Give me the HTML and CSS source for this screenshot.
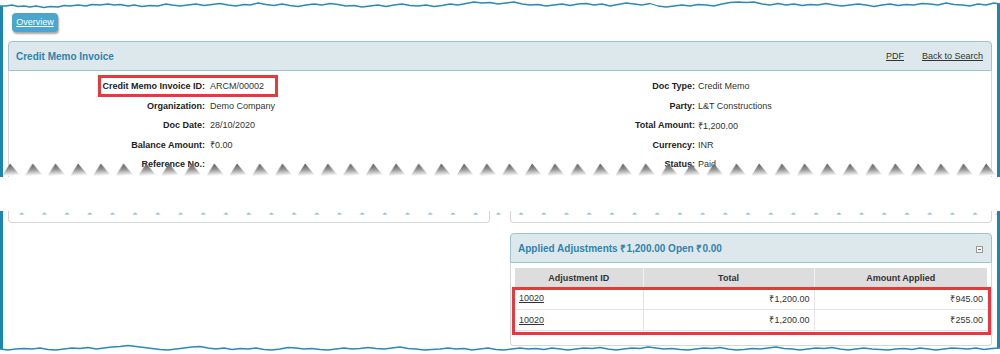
FILE: index.html
```html
<!DOCTYPE html>
<html>
<head>
<meta charset="utf-8">
<title>Credit Memo Invoice</title>
<link rel="stylesheet" href="styles.css">
</head>
<body>
<div class="sheet">
  <svg class="svg-defs" width="0" height="0" aria-hidden="true">
    <defs>
      <linearGradient id="shade" x1="0.25" y1="0" x2="0.35" y2="1">
        <stop offset="0" stop-color="#565656"/>
        <stop offset="0.5" stop-color="#979797"/>
        <stop offset="1" stop-color="#ffffff"/>
      </linearGradient>
      <filter id="soft" x="-5%" y="-20%" width="110%" height="140%">
        <feGaussianBlur stdDeviation="0.5"/>
      </filter>
      <pattern id="zig" width="22.7" height="15" patternUnits="userSpaceOnUse">
        <polygon points="-1,14 7,1.5 17.5,14" fill="url(#shade)"/>
      </pattern>
      <pattern id="dash" width="22.7" height="6" patternUnits="userSpaceOnUse">
        <polygon points="16,3.6 18.7,1.4 21.4,3.6" fill="#86b4c6"/>
      </pattern>
    </defs>
  </svg>

  <section class="piece piece-top">
    <a class="btn-overview" href="#">Overview</a>
    <div class="panel panel-main">
      <div class="panel-head">
        <h2 class="panel-title">Credit Memo Invoice</h2>
        <nav class="head-links"><a href="#">PDF</a><a href="#">Back to Search</a></nav>
      </div>
      <div class="panel-body fields">
        <div class="lbl">Credit Memo Invoice ID:</div><div class="val">ARCM/00002</div>
        <div class="lbl">Doc Type:</div><div class="val val-r">Credit Memo</div>
        <div class="lbl">Organization:</div><div class="val">Demo Company</div>
        <div class="lbl">Party:</div><div class="val val-r">L&amp;T Constructions</div>
        <div class="lbl">Doc Date:</div><div class="val">28/10/2020</div>
        <div class="lbl">Total Amount:</div><div class="val val-r">₹1,200.00</div>
        <div class="lbl">Balance Amount:</div><div class="val">₹0.00</div>
        <div class="lbl">Currency:</div><div class="val val-r">INR</div>
        <div class="lbl">Reference No.:</div><div class="val"></div>
        <div class="lbl">Status:</div><div class="val val-r">Paid</div>
      </div>
      <div class="mark mark-id"></div>
    </div>
    <svg class="tear-top" width="994" height="15" aria-hidden="true"><rect x="0" y="0" width="994" height="15" fill="url(#zig)" filter="url(#soft)"/></svg>
  </section>

  <div class="gap"></div>

  <section class="piece piece-bottom">
    <svg class="tear-bottom" width="994" height="6" aria-hidden="true"><rect x="0" y="0" width="994" height="6" fill="url(#dash)"/></svg>
    <div class="cols">
      <div class="col">
        <div class="stub"></div>
      </div>
      <div class="col">
        <div class="stub"></div>
        <div class="panel panel-adj">
          <div class="panel-head">
            <h2 class="panel-title">Applied Adjustments ₹1,200.00 Open ₹0.00</h2>
            <span class="collapse-icon"></span>
          </div>
          <div class="panel-body adj-body">
            <table class="adj-table">
              <colgroup><col class="c1"><col class="c2"><col class="c3"></colgroup>
              <thead>
                <tr><th>Adjustment ID</th><th>Total</th><th>Amount Applied</th></tr>
              </thead>
              <tbody>
                <tr><td><a href="#">10020</a></td><td class="num">₹1,200.00</td><td class="num">₹945.00</td></tr>
                <tr><td><a href="#">10020</a></td><td class="num">₹1,200.00</td><td class="num">₹255.00</td></tr>
              </tbody>
            </table>
          </div>
          <div class="mark mark-rows"></div>
        </div>
      </div>
    </div>
  </section>

  <svg class="edge edge-top" width="1000" height="14" aria-hidden="true">
    <polygon fill="#ffffff" points="0,-2 0,6 6,6 12,5 18,6.5 24,6 30,7 36,6 44,7.5 50,6.5 58,7 64,5.5 70,6 78,5 86,6 92,4.5 100,5 108,4 114,5 120,4.5 128,6 134,5 142,6.5 150,5.5 158,6 166,4 172,5 180,6 188,5 196,4 204,5.5 212,4.5 220,3.5 228,5 236,6 244,4.5 250,5 258,3 266,4.5 274,5.5 282,4 290,5.5 298,6.5 306,5 314,4 322,5 330,3.5 338,4.5 346,6 354,5.5 362,7 370,6 378,5 386,6.5 394,5 402,4 410,5.5 418,6 426,5 434,6.5 442,5.5 450,4 458,5 466,3.5 474,2 482,3 490,2.5 498,4 506,3 514,2 522,4 530,5 538,4.5 546,6 554,5 562,4 570,5.5 578,4 586,3.5 594,5 602,4 610,6 618,4.5 626,3 634,4 642,5 650,3.5 658,6 666,7 674,6 682,5 690,6 698,4.5 706,5 714,6 722,4 730,2.5 738,2 746,2.5 754,2 762,4 770,5 778,3.5 786,5 794,4 802,5.5 810,4.5 818,5 826,3.5 834,5 842,6 850,5 858,4 866,5 874,6.5 882,5 890,4 898,5.5 906,4.5 914,5 922,3.5 930,4 938,5 946,3 954,4.5 962,5 970,6 978,4 986,5 994,3 1000,4 1000,-2"/>
    <polyline fill="none" stroke="#2a8ab3" stroke-width="1.3" stroke-linejoin="round" points="0,6 6,6 12,5 18,6.5 24,6 30,7 36,6 44,7.5 50,6.5 58,7 64,5.5 70,6 78,5 86,6 92,4.5 100,5 108,4 114,5 120,4.5 128,6 134,5 142,6.5 150,5.5 158,6 166,4 172,5 180,6 188,5 196,4 204,5.5 212,4.5 220,3.5 228,5 236,6 244,4.5 250,5 258,3 266,4.5 274,5.5 282,4 290,5.5 298,6.5 306,5 314,4 322,5 330,3.5 338,4.5 346,6 354,5.5 362,7 370,6 378,5 386,6.5 394,5 402,4 410,5.5 418,6 426,5 434,6.5 442,5.5 450,4 458,5 466,3.5 474,2 482,3 490,2.5 498,4 506,3 514,2 522,4 530,5 538,4.5 546,6 554,5 562,4 570,5.5 578,4 586,3.5 594,5 602,4 610,6 618,4.5 626,3 634,4 642,5 650,3.5 658,6 666,7 674,6 682,5 690,6 698,4.5 706,5 714,6 722,4 730,2.5 738,2 746,2.5 754,2 762,4 770,5 778,3.5 786,5 794,4 802,5.5 810,4.5 818,5 826,3.5 834,5 842,6 850,5 858,4 866,5 874,6.5 882,5 890,4 898,5.5 906,4.5 914,5 922,3.5 930,4 938,5 946,3 954,4.5 962,5 970,6 978,4 986,5 994,3 1000,4"/>
  </svg>
  <svg class="edge edge-bottom" width="1000" height="14" aria-hidden="true">
    <polygon fill="#ffffff" points="0,16 0,9 8,10 16,9 24,8.5 32,9 40,8 48,9.5 56,10 64,9 72,8 80,8.5 88,7.5 96,9 104,8 112,7 120,6.5 128,5.5 136,6.5 144,7.5 152,8.5 160,9.5 168,10 176,9 184,8 192,7 200,6.5 208,8 216,9 224,8 232,9.5 240,8.5 248,9 256,8 264,9.5 272,10 280,9 288,7.5 296,8 304,9 312,8.5 320,9.5 328,10 336,9 344,8 352,9 360,8.5 368,7.5 376,8.5 384,9 392,8 400,7 408,8.5 416,9 424,10 432,9.5 440,9 448,8 456,9 464,8.5 472,10 480,9 488,8 496,9.5 504,10 512,9 520,8 528,9 536,8.5 544,9.5 552,8 560,9 568,10 576,9 584,8 592,8.5 600,7.5 608,9 616,10 624,9 632,8 640,8.5 648,7 656,8 664,9 672,8.5 680,9.5 688,10 696,9 704,8 712,8.5 720,7.5 728,9 736,10 744,9.5 752,8.5 760,9 768,8 776,7 784,8.5 792,9 800,10 808,9 816,8 824,8.5 832,7.5 840,9 848,10 856,9 864,8 872,9 880,9.5 888,10 896,9 904,8.5 912,9.5 920,8 928,9 936,10 944,9 952,8 960,8.5 968,9 976,8 984,9.5 992,8.5 1000,8 1000,16"/>
    <polyline fill="none" stroke="#2a8ab3" stroke-width="1.3" stroke-linejoin="round" points="0,9 8,10 16,9 24,8.5 32,9 40,8 48,9.5 56,10 64,9 72,8 80,8.5 88,7.5 96,9 104,8 112,7 120,6.5 128,5.5 136,6.5 144,7.5 152,8.5 160,9.5 168,10 176,9 184,8 192,7 200,6.5 208,8 216,9 224,8 232,9.5 240,8.5 248,9 256,8 264,9.5 272,10 280,9 288,7.5 296,8 304,9 312,8.5 320,9.5 328,10 336,9 344,8 352,9 360,8.5 368,7.5 376,8.5 384,9 392,8 400,7 408,8.5 416,9 424,10 432,9.5 440,9 448,8 456,9 464,8.5 472,10 480,9 488,8 496,9.5 504,10 512,9 520,8 528,9 536,8.5 544,9.5 552,8 560,9 568,10 576,9 584,8 592,8.5 600,7.5 608,9 616,10 624,9 632,8 640,8.5 648,7 656,8 664,9 672,8.5 680,9.5 688,10 696,9 704,8 712,8.5 720,7.5 728,9 736,10 744,9.5 752,8.5 760,9 768,8 776,7 784,8.5 792,9 800,10 808,9 816,8 824,8.5 832,7.5 840,9 848,10 856,9 864,8 872,9 880,9.5 888,10 896,9 904,8.5 912,9.5 920,8 928,9 936,10 944,9 952,8 960,8.5 968,9 976,8 984,9.5 992,8.5 1000,8"/>
  </svg>
</div>
</body>
</html>
```

FILE: styles.css
```css
* { box-sizing: border-box; }

html, body {
  margin: 0;
  padding: 0;
  background: #ffffff;
}

body {
  font-family: "Liberation Sans", Arial, sans-serif;
  font-size: 9px;
  color: #333333;
}

a { color: #333333; text-decoration: underline; }

.sheet {
  position: relative;
  width: 1000px;
  height: 354px;
  overflow: hidden;
  background: #ffffff;
}

.svg-defs { position: absolute; width: 0; height: 0; }

.piece {
  position: relative;
  border-left: 3px solid #1a86b1;
  border-right: 3px solid #1a86b1;
  padding: 0 5px;
  overflow: hidden;
}

.piece-top { height: 177px; padding-top: 13px; }
.gap { height: 34px; }
.piece-bottom { height: 138px; }

.btn-overview {
  display: block;
  margin-left: 4px;
  margin-bottom: 9px;
  width: 46px;
  height: 19px;
  line-height: 19px;
  text-align: center;
  background: #4ba6cc;
  color: #ffffff;
  border-radius: 4px;
  box-shadow: 1px 2px 2px rgba(0, 0, 0, 0.35);
}

.panel { position: relative; }

.panel-head {
  display: flex;
  align-items: center;
  justify-content: space-between;
  height: 30px;
  padding: 0 8px 0 7px;
  border: 1px solid #9fc2d3;
  border-radius: 4px 4px 0 0;
  background: #dde8ed;
}

.panel-title {
  margin: 0;
  font-size: 10px;
  font-weight: bold;
  color: #2f83ae;
}

.head-links { display: flex; gap: 18px; }

.panel-body {
  border: 1px solid #d6d6d6;
  border-top: 0;
  border-radius: 0 0 4px 4px;
  background: #ffffff;
}

.fields {
  display: grid;
  grid-template-columns: 196px 295px 195px 1fr;
  grid-auto-rows: 19.5px;
  align-items: center;
  align-content: start;
  padding-top: 5.5px;
  min-height: 200px;
}

.lbl { text-align: right; font-weight: bold; color: #222222; }
.val { padding-left: 5px; color: #333333; }
.val-r { padding-left: 3px; }

.mark {
  position: absolute;
  border: 3px solid #e8383d;
}

.mark-id { left: 90px; top: 34px; width: 180px; height: 22px; }

.tear-top { position: absolute; left: 0; bottom: 0; display: block; }
.tear-bottom { position: absolute; left: 0; top: 0; display: block; }

.cols {
  display: grid;
  grid-template-columns: 482px 482px;
  column-gap: 20px;
}

.stub {
  height: 12px;
  border: 1px solid #d6d6d6;
  border-top: 0;
  border-radius: 0 0 4px 4px;
}

.panel-adj { margin-top: 10px; }

.collapse-icon {
  position: relative;
  width: 7px;
  height: 7px;
  margin-top: 2px;
  border: 1px solid #9a9a9a;
  background: #f4f4f4;
}

.collapse-icon::after {
  content: "";
  position: absolute;
  left: 1px;
  right: 1px;
  top: 2px;
  height: 1px;
  background: #777777;
}

.adj-body { padding: 5px 4px 14px; }

.adj-table {
  width: 100%;
  border-collapse: collapse;
  table-layout: fixed;
}

.adj-table .c1 { width: 128px; }
.adj-table .c2 { width: 171px; }

.adj-table th {
  height: 20px;
  padding: 0;
  background: #dddddd;
  font-weight: bold;
  color: #333333;
  text-align: center;
  border-right: 1px solid #f2f2f2;
}

.adj-table th:last-child { border-right: 0; }

.adj-table td {
  height: 21px;
  padding: 0 4px;
  border-bottom: 1px solid #e4e4e4;
  border-right: 1px solid #e4e4e4;
  color: #333333;
}

.adj-table td:last-child { border-right: 0; }
.adj-table td.num { text-align: right; }

.mark-rows { left: 2px; top: 54px; width: 479px; height: 48px; }

.edge { position: absolute; left: 0; display: block; }
.edge-top { top: 0; }
.edge-bottom { top: 340px; }
```
